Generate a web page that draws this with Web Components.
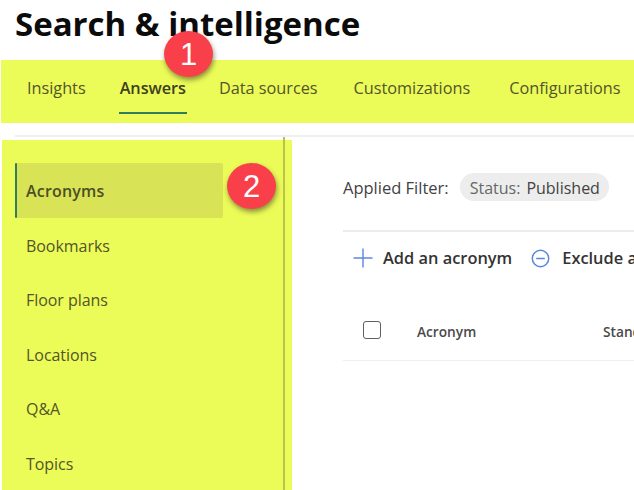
<!DOCTYPE html>
<html><head><meta charset="utf-8">
<style>
html,body{margin:0;padding:0;background:#fff}
body{width:634px;height:490px;overflow:hidden;font-family:"Open Sans","Noto Sans",sans-serif;color:#242424}
</style></head><body>
<admin-page></admin-page>
<script>
function el(name, css, html, setup){
  customElements.define(name, class extends HTMLElement{
    connectedCallback(){
      if(this.shadowRoot) return;
      const r=this.attachShadow({mode:'open'});
      r.innerHTML='<style>'+css+'</style>'+html(this);
      if(setup) setup(this,r);
    }
  });
}
el('num-badge',`:host{position:absolute;width:49px;height:46px;border-radius:50%;background:#f9404a;color:#fff;
  box-shadow:1px 3px 5px rgba(60,60,30,.55);display:flex;align-items:center;justify-content:center;
  font:400 31px/1 "Liberation Sans",sans-serif;z-index:3}`,h=>'<slot></slot>');
el('tab-item',`:host{display:flex;flex-direction:column;align-items:stretch;height:100%;color:#53552a;font-size:16.3px;letter-spacing:-.02px;white-space:nowrap}
  .t{flex:1;display:flex;align-items:center;padding-top:4px}
  .u{height:2px;margin:0 -1px 9px;background:transparent}
  :host([active]) {color:#3e4020;font-weight:600;letter-spacing:-.05px}
  :host([active]) .u{background:#2f7d5d}`,h=>'<div class="t"><slot></slot></div><div class="u"></div>');
el('tab-bar',`:host{display:flex;height:63px;margin:0 0 0 1px;padding-left:26px;background:#ebfb58;box-sizing:border-box}
  .g{display:flex;height:100%;gap:34px}`,h=>'<div class="g"><slot></slot></div>');
el('side-item',`:host{display:flex;align-items:center;height:54.5px;box-sizing:border-box;padding:2px 0 0 11px;color:#53552a;font-size:16px;letter-spacing:-.05px;width:208px;position:relative;border-radius:2px}
  :host([active]){background:#d8e356;font-weight:600;letter-spacing:.2px;color:#4c4f26}
  :host([active])::before{content:"";position:absolute;left:0;top:0;bottom:0;width:2px;background:#2f7d5d;border-radius:1px}`,h=>'<slot></slot>');
el('side-nav',`:host{display:block;width:290px;margin-left:2px;background:#ebfb58;box-sizing:border-box;padding:23px 0 0 13px;position:relative;height:350px}
  :host::after{content:"";position:absolute;left:281px;top:-3px;bottom:0;width:2px;background:#bcc24f}`,h=>'<slot></slot>');
el('filter-chip',`:host{display:inline-flex;align-items:center;height:28px;box-sizing:border-box;padding:2px 9px 0 10px;border-radius:14px;background:#ededed;gap:6px;font-size:16px;color:#666;white-space:nowrap}
  b{font-weight:400;color:#424242}`,h=>'<span>Status:</span><b>Published</b>');
el('tool-button',`:host{display:inline-flex;align-items:center;gap:10px;font-size:16.4px;font-weight:600;color:#333;white-space:nowrap}
  :host([icon=minus]){gap:12px}
  span{margin-top:-1px}
  svg{display:block;flex:none}`,h=>(h.getAttribute('icon')==='plus'
  ?'<svg width="20" height="20" viewBox="0 0 20 20" fill="none" stroke="#5b86e0" stroke-width="1.4"><path d="M10 0.5V19.5M0.5 10H19.5"/></svg>'
  :'<svg width="19" height="19" viewBox="0 0 19 19" fill="none" stroke="#5b86e0" stroke-width="1.5"><circle cx="9.5" cy="9.5" r="8.2"/><path d="M5.2 9.5H13.8"/></svg>')+'<span><slot></slot></span>');
el('content-pane',`:host{display:block;flex:1;min-width:0;padding-left:51px;overflow:hidden;height:350px}
  .f{display:flex;align-items:center;gap:11px;height:28px;margin-top:33px;font-size:16.5px;color:#424242;white-space:nowrap}
  .d{height:2px;background:#ececec;margin-top:29px}
  .tb{display:flex;align-items:center;gap:19px;padding-left:10px;height:52px;margin-top:0;white-space:nowrap}
  .h{display:flex;align-items:center;height:50px;padding-bottom:4px;margin-top:22px;border-bottom:1.5px solid #efefef;white-space:nowrap;font-size:13.7px;font-weight:600;color:#4a4a4a;box-sizing:content-box}
  .c{width:16px;height:16px;border:1.3px solid #5f5f5f;border-radius:3px;margin-left:20px;flex:none;margin-top:-2px}
  .a{margin-left:36px;width:186px;flex:none}`,
  h=>`<div class="f"><span>Applied Filter:</span><filter-chip></filter-chip></div><div class="d"></div>
  <div class="tb"><tool-button icon="plus">Add an acronym</tool-button><tool-button icon="minus">Exclude a</tool-button></div>
  <div class="h"><div class="c"></div><div class="a">Acronym</div><div>Standard</div></div>`);
el('admin-page',`:host{display:block;position:relative;width:634px;height:490px;overflow:hidden}
  h1{margin:0;height:60px;box-sizing:border-box;padding:4px 0 0 15px;font-size:33px;line-height:40px;font-weight:700;color:#0b0b0b;white-space:nowrap}
  .rule{height:2px;margin:12px 0 3px 15px;background:#f0f0f0}
  .main{display:flex}
  .b1{left:164px;top:31px}.b2{left:227px;top:163px}
  .m1{margin-left:-1px}.m2{margin-left:2px}.m3{margin-left:5px}`,
  h=>`<h1>Search &amp; intelligence</h1>
  <tab-bar><tab-item>Insights</tab-item><tab-item active>Answers</tab-item><tab-item class="m1">Data sources</tab-item><tab-item class="m2">Customizations</tab-item><tab-item class="m3">Configurations</tab-item></tab-bar>
  <div class="rule"></div>
  <div class="main"><side-nav><side-item active>Acronyms</side-item><side-item>Bookmarks</side-item><side-item>Floor plans</side-item><side-item>Locations</side-item><side-item>Q&amp;A</side-item><side-item>Topics</side-item></side-nav><content-pane></content-pane></div>
  <num-badge class="b1">1</num-badge><num-badge class="b2">2</num-badge>`);
</script>
</body></html>
